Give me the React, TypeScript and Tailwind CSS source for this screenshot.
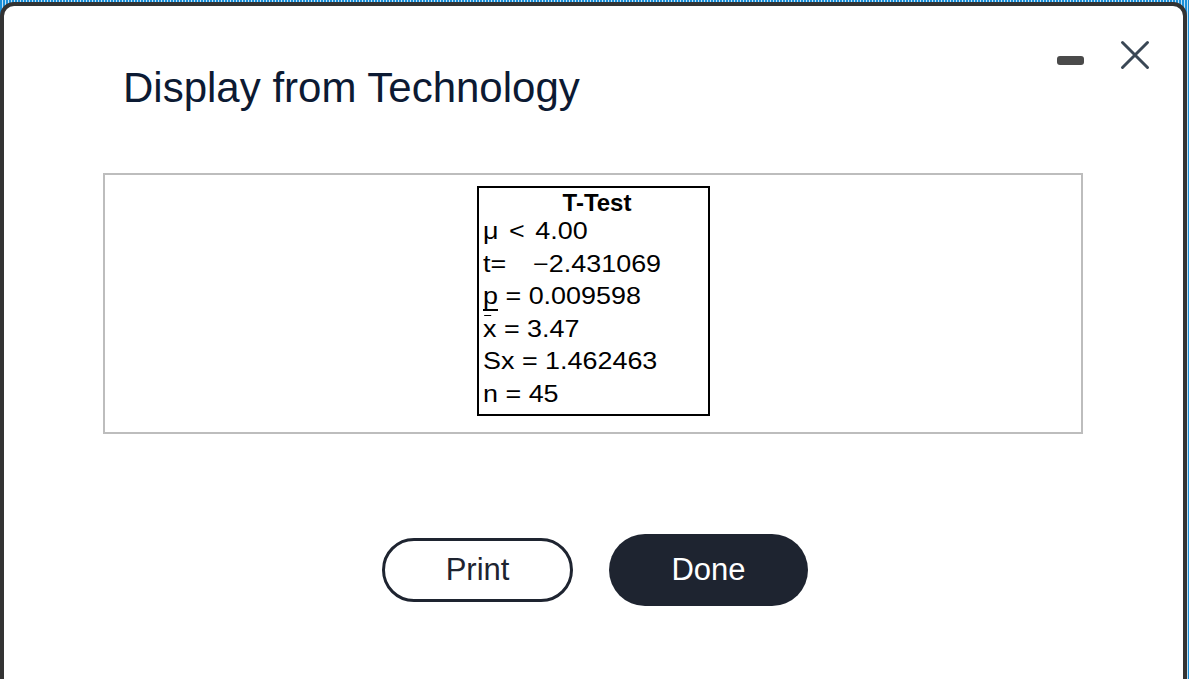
import React from "react";

const font = { fontFamily: '"Liberation Sans", Arial, Helvetica, sans-serif' };

function CloseIcon() {
  return (
    <svg width="32" height="32" viewBox="0 0 32 32" fill="none">
      <path d="M3.5 3.5 L28.5 28.5 M28.5 3.5 L3.5 28.5" stroke="#3a4755" strokeWidth="3" strokeLinecap="round" />
    </svg>
  );
}

function TTestOutput() {
  const lines: React.ReactNode[] = [
    <>μ<span className="mx-[9px]">&lt;</span>4.00</>,
    <>t=<span className="inline-block w-[23px]" />−2.431069</>,
    <>
      <span className="underline decoration-[1.5px] underline-offset-[5px]">p</span> = 0.009598
    </>,
    <>
      <span className="relative inline-block">
        x
        <span className="absolute left-[1px] top-[2px] w-[6px] h-[1.5px] bg-black" />
      </span>{" "}
      = 3.47
    </>,
    <>Sx = 1.462463</>,
    <>n = 45</>,
  ];

  return (
    <div className="mx-auto mt-[11px] w-[233px] h-[230px] border-2 border-black bg-white text-black" style={font}>
      <div className="pt-[2px] pl-[8px] text-center text-[24px] font-bold leading-[25px]">T-Test</div>
      <div className="pl-[4px] text-[23px] leading-[32.5px]">
        <div className="inline-block origin-left scale-x-[1.17] whitespace-nowrap">
          {lines.map((l, i) => (
            <div key={i}>{l}</div>
          ))}
        </div>
      </div>
    </div>
  );
}

export default function App() {
  return (
    <div
      className="w-[1189px] h-[679px] overflow-hidden bg-[repeating-linear-gradient(90deg,#1b8fd8_0px,#1b8fd8_2px,#bfe0f5_2px,#bfe0f5_3px)]"
      style={font}
    >
      <div className="mt-[2px] w-[1187px] h-[690px] border-4 border-[#333333] rounded-[14px] bg-white">
        {/* Header */}
        <div className="flex items-start">
          <h1 className="pl-[119px] pt-[61px] text-[42px] leading-[42px] font-normal text-[#0c1a33]">
            Display from Technology
          </h1>
          <div className="ml-auto flex items-start gap-[35px] pr-[32px] pt-[33px]">
            <div className="mt-[17px] w-[27px] h-[9px] rounded-[3px] bg-[#4a4a4a]" />
            <CloseIcon />
          </div>
        </div>

        {/* Output panel */}
        <div className="ml-[99px] mt-[64px] w-[980px] h-[261px] border-2 border-[#bdbdbd]">
          <TTestOutput />
        </div>

        {/* Buttons */}
        <div className="mt-[100px] flex items-center pl-[378px] gap-[36px]">
          <button className="w-[191px] h-[64px] rounded-full border-[3px] border-[#1e2430] bg-white text-[31px] text-[#1e2430]">
            Print
          </button>
          <button className="w-[199px] h-[72px] rounded-full bg-[#1e2430] text-[31px] text-white">
            Done
          </button>
        </div>
      </div>
    </div>
  );
}
